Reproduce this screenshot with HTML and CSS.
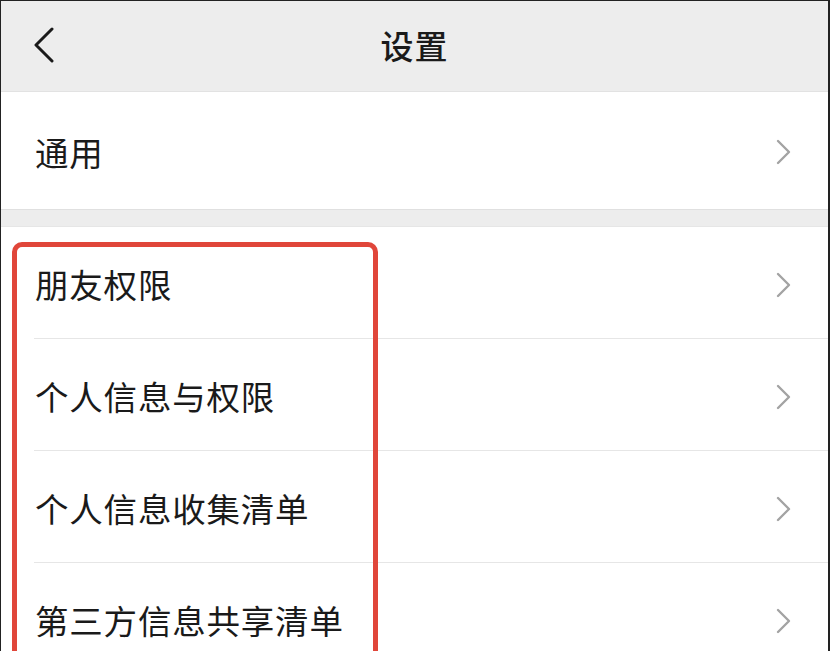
FILE: index.html
```html
<!DOCTYPE html>
<html lang="zh">
<head>
<meta charset="utf-8">
<title>设置</title>
<link rel="stylesheet" href="styles.css">
</head>
<body>
<div class="screen">
  <header class="topbar">
    <span class="back">
      <svg width="24" height="38" viewBox="0 0 24 38"><polyline points="19,2 3,18 19,34" fill="none" stroke="#1a1a1a" stroke-width="3" stroke-linecap="round" stroke-linejoin="round"/></svg>
    </span>
    <h1 class="title">设置</h1>
  </header>

  <section class="group group-first">
    <div class="row row-tall">
      <span class="label">通用</span>
      <svg class="chev" width="16" height="26" viewBox="0 0 16 26"><polyline points="2,2 13,13 2,24" fill="none" stroke="#a3a3a3" stroke-width="2.4" stroke-linecap="round" stroke-linejoin="round"/></svg>
    </div>
  </section>

  <div class="gap"></div>

  <section class="group">
    <div class="row">
      <span class="label">朋友权限</span>
      <svg class="chev" width="16" height="26" viewBox="0 0 16 26"><polyline points="2,2 13,13 2,24" fill="none" stroke="#a3a3a3" stroke-width="2.4" stroke-linecap="round" stroke-linejoin="round"/></svg>
    </div>
    <div class="row">
      <span class="label">个人信息与权限</span>
      <svg class="chev" width="16" height="26" viewBox="0 0 16 26"><polyline points="2,2 13,13 2,24" fill="none" stroke="#a3a3a3" stroke-width="2.4" stroke-linecap="round" stroke-linejoin="round"/></svg>
    </div>
    <div class="row">
      <span class="label">个人信息收集清单</span>
      <svg class="chev" width="16" height="26" viewBox="0 0 16 26"><polyline points="2,2 13,13 2,24" fill="none" stroke="#a3a3a3" stroke-width="2.4" stroke-linecap="round" stroke-linejoin="round"/></svg>
    </div>
    <div class="row">
      <span class="label">第三方信息共享清单</span>
      <svg class="chev" width="16" height="26" viewBox="0 0 16 26"><polyline points="2,2 13,13 2,24" fill="none" stroke="#a3a3a3" stroke-width="2.4" stroke-linecap="round" stroke-linejoin="round"/></svg>
    </div>
  </section>

  <div class="highlight"></div>
</div>
</body>
</html>
```

FILE: styles.css
```css
* { box-sizing: border-box; margin: 0; padding: 0; }
html, body { width: 830px; height: 651px; overflow: hidden; background: #fff; }
body {
  font-family: "Noto Sans CJK SC", "Noto Sans", sans-serif;
  color: #1a1a1a;
}
.screen {
  position: relative;
  width: 830px;
  height: 651px;
  overflow: hidden;
  border-top: 1px solid #222;
  border-left: 1px solid #222;
  border-right: 2px solid #222;
  background: #fff;
}
.topbar {
  position: relative;
  height: 91px;
  background: #ededed;
  border-bottom: 1px solid #e2e2e2;
  display: flex;
  align-items: center;
  justify-content: center;
}
.back {
  position: absolute;
  left: 32px;
  top: 26px;
  display: flex;
}
.title {
  font-size: 33px;
  font-weight: 500;
  line-height: 1;
  letter-spacing: 1px;
  margin-top: -1px;
}
.group { background: #fff; }
.row {
  height: 112px;
  display: flex;
  align-items: center;
  justify-content: space-between;
  padding-left: 34px;
  padding-right: 36px;
  position: relative;
}
.row + .row::before {
  content: "";
  position: absolute;
  left: 33px;
  right: 0;
  top: -1px;
  border-top: 1px solid #e6e6e6;
}
.row-tall { height: 117px; }
.label {
  font-size: 33.5px;
  line-height: 1;
  letter-spacing: 0.8px;
  margin-top: 2px;
}
.chev { display: block; margin-top: 3px; }
.gap {
  height: 18px;
  background: #ededed;
  border-top: 1px solid #e0e0e0;
  border-bottom: 1px solid #e6e6e6;
}
.highlight {
  position: absolute;
  left: 11px;
  top: 241px;
  width: 366px;
  height: 460px;
  border: 5px solid #e0463a;
  border-radius: 10px;
}
```
